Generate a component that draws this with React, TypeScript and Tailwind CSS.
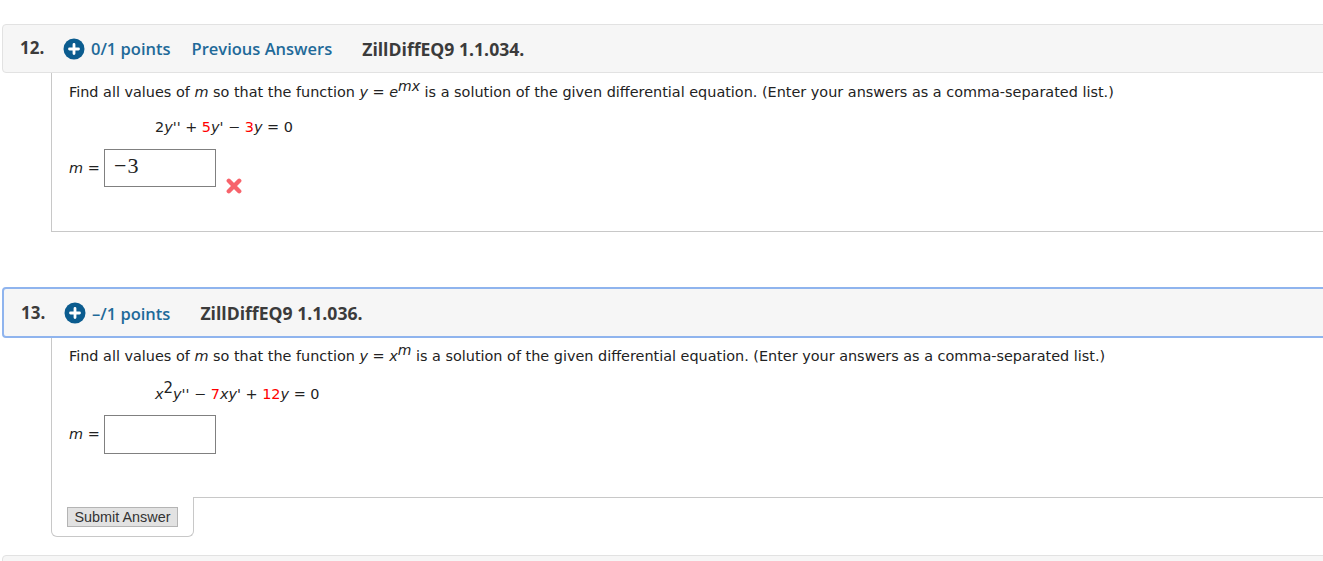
import React from 'react';

const PlusBadge = () => (
  <svg width="22" height="22" viewBox="0 0 22 22" className="shrink-0">
    <circle cx="11" cy="11" r="10.5" fill="#0b5c8f" />
    <path d="M11 6.5v9M6.5 11h9" stroke="#fff" strokeWidth="2.8" strokeLinecap="round" />
  </svg>
);

const WrongMark = () => (
  <svg width="16" height="16" viewBox="0 0 16 16">
    <path d="M2.8 2.8l10.4 10.4M13.2 2.8L2.8 13.2" stroke="#f7636b" strokeWidth="4.4" strokeLinecap="round" />
  </svg>
);

const V = ({ children }: { children: React.ReactNode }) => <i>{children}</i>;
const R = ({ children }: { children: React.ReactNode }) => <span className="text-[#ff0000]">{children}</span>;

export default function App() {
  return (
    <div className="w-[1323px] h-[561px] overflow-hidden bg-white text-[#222] font-['DejaVu_Sans',Verdana,sans-serif] text-[14.42px] pt-6 pl-0.5">
      {/* question 12 */}
      <div className="h-[49px] w-[1330px] flex items-center bg-[#f6f6f6] border border-[#e2e2e2] rounded-sm pl-[17px] font-['Open_Sans',sans-serif]">
        <span className="w-[43px] text-[17px] font-bold text-[#3b3b3b] -mt-0.5">12.</span>
        <PlusBadge />
        <span className="ml-[6px] mt-0.5 text-[16.5px] font-semibold text-[#1f6a99]">0/1 points</span>
        <span className="ml-[21px] mt-0.5 text-[16.5px] font-semibold text-[#1f6a99]">Previous Answers</span>
        <span className="ml-[30px] mt-px text-[17.6px] font-bold text-[#3b3b3b]">ZillDiffEQ9 1.1.034.</span>
      </div>
      <div className="ml-[49px] h-[159px] border-l border-b border-[#c8c8c8] pl-[17px] pt-[9px]">
        <p className="h-5 leading-5 whitespace-nowrap">
          Find all values of <V>m</V> so that the function <V>y</V> = <V>e</V>
          <sup className="text-[14px] italic top-[-6px] leading-none">mx</sup> is a solution of the given differential equation. (Enter your answers as a comma-separated list.)
        </p>
        <p className="mt-[15px] ml-[86px] h-5 leading-5 whitespace-nowrap">
          2<V>y''</V> + <R>5</R><V>y'</V> − <R>3</R><V>y</V> = 0
        </p>
        <div className="mt-[12px] flex items-start">
          <span className="w-[35px] mt-[9px] leading-5 whitespace-nowrap"><V>m</V> =</span>
          <div className="w-[112px] h-[38px] border border-[#808080] pl-[9px] pt-[3px] font-['Liberation_Serif',serif] text-[22px] leading-[26px] tracking-[1px]">−3</div>
          <span className="ml-[10px] mt-[29px]"><WrongMark /></span>
        </div>
      </div>

      {/* question 13 */}
      <div className="mt-[55px] h-[51px] w-[1330px] flex items-center bg-[#f6f6f6] border-2 border-[#8fb4ee] rounded-sm pl-[17px] font-['Open_Sans',sans-serif]">
        <span className="w-[43px] text-[17px] font-bold text-[#3b3b3b]">13.</span>
        <PlusBadge />
        <span className="ml-[6px] mt-1 text-[16.5px] font-semibold text-[#1f6a99]">–/1 points</span>
        <span className="ml-[30px] mt-0.5 text-[17.6px] font-bold text-[#3b3b3b]">ZillDiffEQ9 1.1.036.</span>
      </div>
      <div className="ml-[49px] border-l border-[#c8c8c8] h-[159px] pl-[17px] pt-2">
        <p className="h-5 leading-5 whitespace-nowrap">
          Find all values of <V>m</V> so that the function <V>y</V> = <V>x</V>
          <sup className="text-[14px] italic top-[-6px] leading-none">m</sup> is a solution of the given differential equation. (Enter your answers as a comma-separated list.)
        </p>
        <p className="mt-[18px] ml-[86px] h-5 leading-5 whitespace-nowrap">
          <V>x</V><sup className="text-[15px] top-[-6px] leading-none">2</sup><V>y''</V> − <R>7</R><V>xy'</V> + <R>12</R><V>y</V> = 0
        </p>
        <div className="mt-[11px] flex items-start">
          <span className="w-[35px] mt-[9px] leading-5 whitespace-nowrap"><V>m</V> =</span>
          <div className="w-[112px] h-[39px] border border-[#808080]" />
        </div>
      </div>
      <div className="ml-[49px] flex h-10">
        <div className="w-[143px] border-l border-r border-b border-[#c8c8c8] rounded-b-md pl-[15px] pt-[10px]">
          <button className="block w-[111px] h-5 bg-[#e2e2e2] border border-[#b4b4b4] text-[14.4px] leading-[18px] text-[#333] font-['Liberation_Sans',Arial,sans-serif]">Submit Answer</button>
        </div>
        <div className="flex-1 border-t border-[#c8c8c8]" />
      </div>

      {/* next question, cut off by the window */}
      <div className="mt-[18px] h-10 w-[1330px] bg-[#f6f6f6] border border-[#e2e2e2] rounded-sm" />
    </div>
  );
}
